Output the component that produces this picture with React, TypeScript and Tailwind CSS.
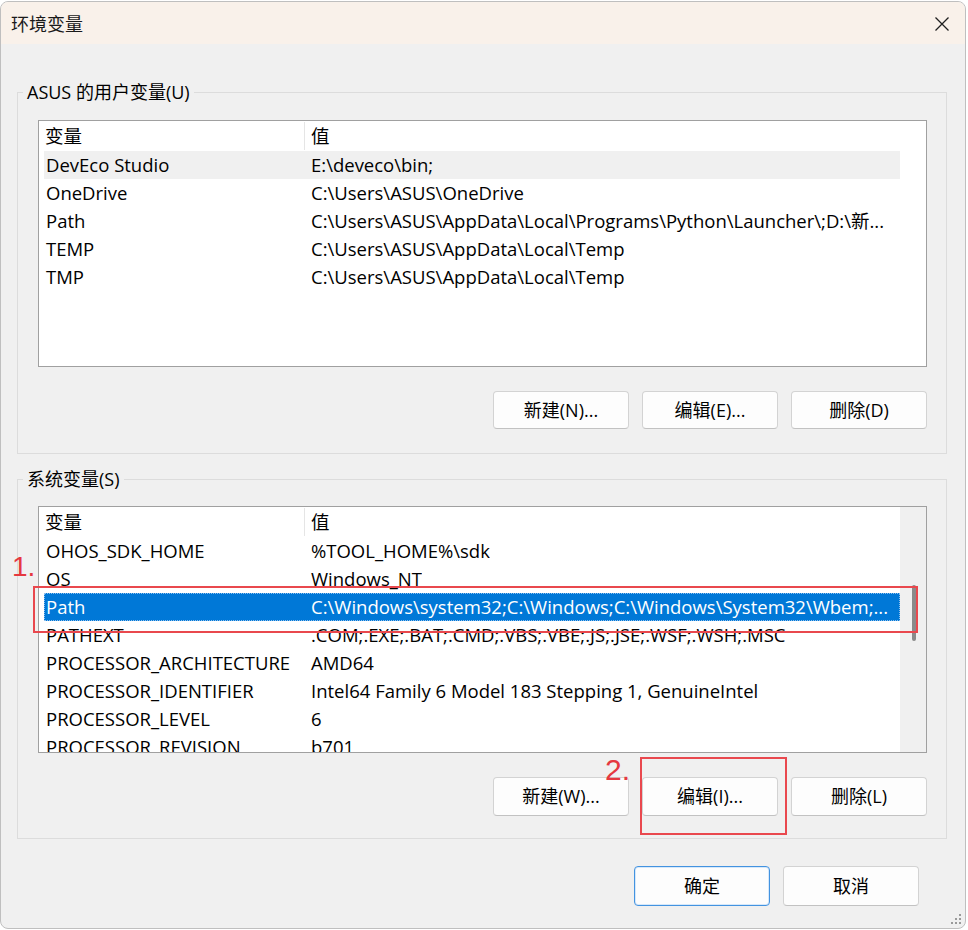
import React from "react";

type Row = { name: string; value: string; state?: "hover" | "selected" };

const userRows: Row[] = [
  { name: "DevEco Studio", value: String.raw`E:\deveco\bin;`, state: "hover" },
  { name: "OneDrive", value: String.raw`C:\Users\ASUS\OneDrive` },
  { name: "Path", value: String.raw`C:\Users\ASUS\AppData\Local\Programs\Python\Launcher\;D:\新...` },
  { name: "TEMP", value: String.raw`C:\Users\ASUS\AppData\Local\Temp` },
  { name: "TMP", value: String.raw`C:\Users\ASUS\AppData\Local\Temp` },
];

const sysRows: Row[] = [
  { name: "OHOS_SDK_HOME", value: String.raw`%TOOL_HOME%\sdk` },
  { name: "OS", value: "Windows_NT" },
  { name: "Path", value: String.raw`C:\Windows\system32;C:\Windows;C:\Windows\System32\Wbem;...`, state: "selected" },
  { name: "PATHEXT", value: ".COM;.EXE;.BAT;.CMD;.VBS;.VBE;.JS;.JSE;.WSF;.WSH;.MSC" },
  { name: "PROCESSOR_ARCHITECTURE", value: "AMD64" },
  { name: "PROCESSOR_IDENTIFIER", value: "Intel64 Family 6 Model 183 Stepping 1, GenuineIntel" },
  { name: "PROCESSOR_LEVEL", value: "6" },
  { name: "PROCESSOR_REVISION", value: "b701" },
];

function ListView({ rows, scrollbar }: { rows: Row[]; scrollbar?: boolean }) {
  return (
    <div className="relative flex h-[247px] w-[889px] overflow-hidden border border-[#a0a0a0] bg-white text-[18.5px]">
      <div className="flex w-[861px] flex-col">
        <div className="flex h-[30px] shrink-0 items-center bg-white">
          <div className="h-full w-[265px] pl-[6px] leading-[30px]">变量</div>
          <div className="h-[28px] w-px bg-[#e5e5e5]" />
          <div className="pl-[6px] leading-[30px]">值</div>
        </div>
        {rows.map((r, i) => {
          const bg =
            r.state === "selected"
              ? "bg-[#0078d7] text-white outline outline-1 outline-dotted outline-[#8fc0ee] -outline-offset-1"
              : r.state === "hover"
              ? "bg-[#f0f0f0]"
              : "";
          return (
            <div key={i} className={`ml-[5px] flex h-[28px] shrink-0 items-center whitespace-nowrap ${bg}`}>
              <div className="w-[260px] shrink-0 overflow-hidden pl-[2px] leading-[28px]">{r.name}</div>
              <div className="overflow-hidden pl-[7px] leading-[28px]">{r.value}</div>
            </div>
          );
        })}
      </div>
      <div className={`flex-1 ${scrollbar ? "bg-[#f0f0f0]" : "bg-white"}`} />
      {scrollbar && (
        <div className="absolute right-[10px] top-[78px] h-[56px] w-[4px] rounded-full bg-[#8a8a8a]" />
      )}
    </div>
  );
}

function Btn({ label, primary }: { label: string; primary?: boolean }) {
  return (
    <div
      className={`flex h-full w-full items-center justify-center rounded-[4px] bg-[#fdfdfd] text-[18px] ${
        primary
          ? "border border-[#4393e0] shadow-[inset_0_0_0_1px_#d6e8fa]"
          : "border border-[#d3d3d3] border-b-[#c2c2c2]"
      }`}
    >
      {label}
    </div>
  );
}

function Group({
  title,
  rows,
  scrollbar,
  buttons,
  className,
  pt,
  pb,
  bh,
}: {
  title: string;
  rows: Row[];
  scrollbar?: boolean;
  buttons: string[];
  className: string;
  pt: string;
  pb: string;
  bh: string;
}) {
  return (
    <fieldset className={`ml-[16px] w-[930px] border border-[#dcdcdc] p-0 ${className}`}>
      <legend className="ml-[5px] px-[4px] text-[18px] leading-[24px]">{title}</legend>
      <div className={`pl-[20px] pr-[19px] ${pt} ${pb}`}>
        <ListView rows={rows} scrollbar={scrollbar} />
        <div className="mt-[24px] flex justify-end gap-[13px]">
          {buttons.map((b) => (
            <div key={b} className={`w-[136px] ${bh}`}>
              <Btn label={b} />
            </div>
          ))}
        </div>
      </div>
    </fieldset>
  );
}

export default function App() {
  return (
    <div className="relative h-[930px] w-[968px] overflow-hidden bg-white font-['Open_Sans','Noto_Sans_CJK_SC',sans-serif] text-black">
      <div className="relative mt-[1px] flex h-[928px] w-[966px] flex-col overflow-hidden rounded-[8px] border border-[#bfbfbf] bg-[#f0f0f0]">
        <div className="flex h-[42px] shrink-0 items-center justify-between bg-[#f9f1ea] pl-[10px] pr-[15px]">
          <span className="font-['Noto_Sans_CJK_SC',sans-serif] text-[18px] leading-[24px] text-[#1a1a1a]">环境变量</span>
          <svg width="16" height="16" viewBox="0 0 16 16" className="mt-[2px]">
            <path d="M1.5 1.5 L14.5 14.5 M14.5 1.5 L1.5 14.5" stroke="#1f1f1f" strokeWidth="1.3" fill="none" />
          </svg>
        </div>

        <Group
          title="ASUS 的用户变量(U)"
          rows={userRows}
          buttons={["新建(N)...", "编辑(E)...", "删除(D)"]}
          className="mt-[36px]"
          pt="pt-[16px]"
          pb="pb-[24px]"
          bh="h-[38px]"
        />
        <Group
          title="系统变量(S)"
          rows={sysRows}
          scrollbar
          buttons={["新建(W)...", "编辑(I)...", "删除(L)"]}
          className="mt-[13px]"
          pt="pt-[15px]"
          pb="pb-[22px]"
          bh="h-[39px]"
        />

        <div className="mt-[27px] flex justify-end gap-[13px] pr-[46px]">
          <div className="h-[40px] w-[136px]">
            <Btn label="确定" primary />
          </div>
          <div className="h-[40px] w-[136px]">
            <Btn label="取消" />
          </div>
        </div>

        <svg width="12" height="12" viewBox="0 0 12 12" className="absolute bottom-[3px] right-[3px]">
          <g fill="#9a9a9a">
            <rect x="9" y="1" width="2" height="2" />
            <rect x="5" y="5" width="2" height="2" />
            <rect x="9" y="5" width="2" height="2" />
            <rect x="1" y="9" width="2" height="2" />
            <rect x="5" y="9" width="2" height="2" />
            <rect x="9" y="9" width="2" height="2" />
          </g>
        </svg>
      </div>

      {/* annotations */}
      <div className="absolute left-[33px] top-[586px] h-[47px] w-[885px] border-2 border-[#e9484e]" />
      <span className="absolute left-[12px] top-[551px] font-['Liberation_Sans',sans-serif] text-[28px] leading-[32px] text-[#e5383f]">1.</span>
      <div className="absolute left-[640px] top-[757px] h-[78px] w-[147px] border-2 border-[#e9484e]" />
      <span className="absolute left-[605px] top-[753px] font-['Liberation_Sans',sans-serif] text-[30px] leading-[34px] text-[#e5383f]">2.</span>
    </div>
  );
}
